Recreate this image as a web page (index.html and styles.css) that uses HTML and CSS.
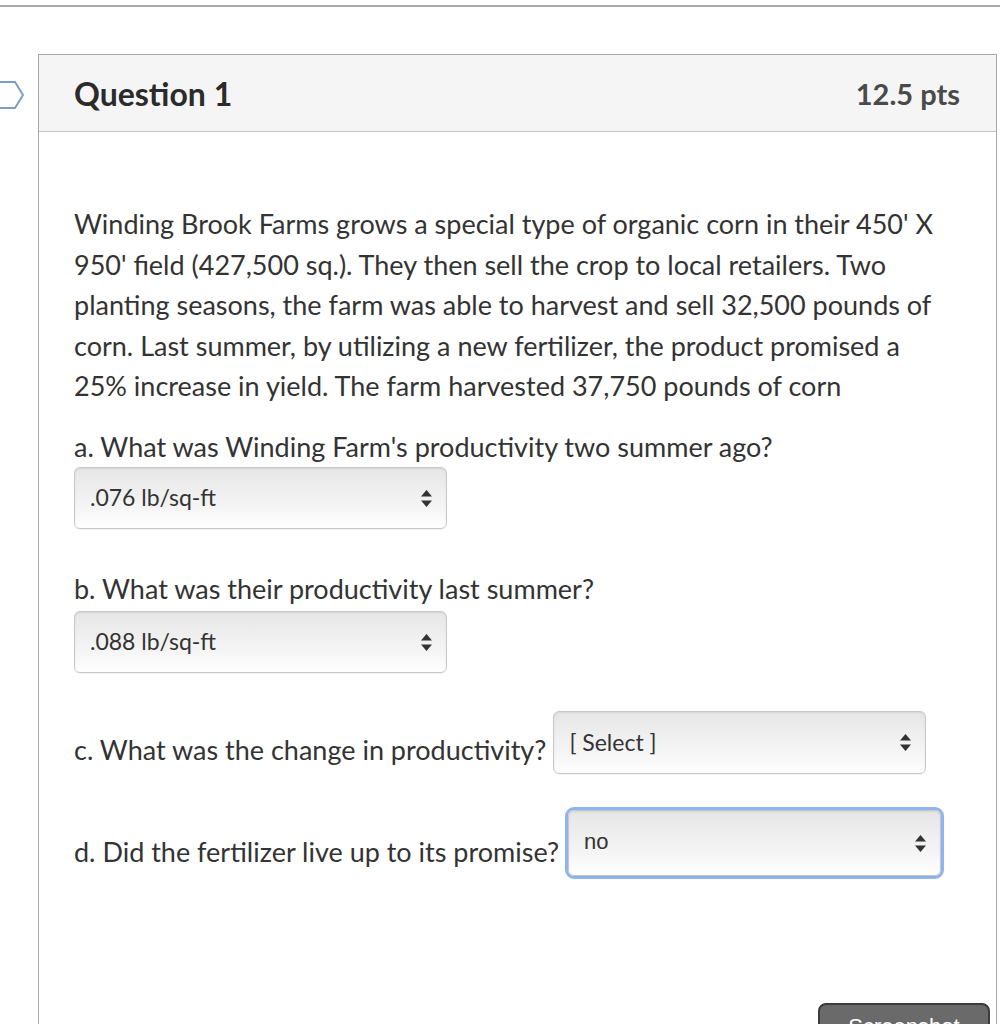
FILE: index.html
```html
<!DOCTYPE html>
<html>
<head>
<meta charset="utf-8">
<link rel="stylesheet" href="styles.css">
</head>
<body>
<div class="topbar"></div>
<div class="question">
  <svg class="pointer" width="26" height="30" viewBox="0 0 26 30"><polygon points="-4,2 15,2 23,15 15,28 -4,28" fill="#fff" stroke="#7f9dc0" stroke-width="2"/></svg>
  <div class="q-header">
    <div class="q-title">Question 1</div>
    <div class="q-pts">12.5 pts</div>
  </div>
  <div class="q-body">
    <p class="para">Winding Brook Farms grows a special type of organic corn in their 450' X 950' field (427,500 sq.). They then sell the crop to local retailers. Two planting seasons, the farm was able to harvest and sell 32,500 pounds of corn. Last summer, by utilizing a new fertilizer, the product promised a 25% increase in yield. The farm harvested 37,750 pounds of corn</p>
    <div class="ask ask-a">a. What was Winding Farm's productivity two summer ago?</div>
    <div class="sel">
      <span class="sel-text">.076 lb/sq-ft</span>
      <svg class="arr" width="11" height="17" viewBox="0 0 11 17"><polygon points="5.5,0 11,6.5 0,6.5" fill="#333"/><polygon points="0,10.5 11,10.5 5.5,17" fill="#333"/></svg>
    </div>
    <div class="ask ask-b">b. What was their productivity last summer?</div>
    <div class="sel">
      <span class="sel-text">.088 lb/sq-ft</span>
      <svg class="arr" width="11" height="17" viewBox="0 0 11 17"><polygon points="5.5,0 11,6.5 0,6.5" fill="#333"/><polygon points="0,10.5 11,10.5 5.5,17" fill="#333"/></svg>
    </div>
    <div class="inline-row row-c">
      <div class="inline-text">c. What was the change in productivity?</div>
      <div class="sel sel-c">
        <span class="sel-text">[ Select ]</span>
        <svg class="arr" width="11" height="17" viewBox="0 0 11 17"><polygon points="5.5,0 11,6.5 0,6.5" fill="#333"/><polygon points="0,10.5 11,10.5 5.5,17" fill="#333"/></svg>
      </div>
    </div>
    <div class="inline-row row-d">
      <div class="inline-text text-d">d. Did the fertilizer live up to its promise?</div>
      <div class="ring">
        <div class="sel sel-d">
          <span class="sel-text sans">no</span>
          <svg class="arr" width="11" height="17" viewBox="0 0 11 17"><polygon points="5.5,0 11,6.5 0,6.5" fill="#333"/><polygon points="0,10.5 11,10.5 5.5,17" fill="#333"/></svg>
        </div>
      </div>
    </div>
  </div>
</div>
<div class="shot-btn">Screenshot</div>
</body>
</html>
```
FILE: styles.css
```css
html, body {
  margin: 0;
  padding: 0;
  background: #fff;
}
body {
  font-family: Lato, "Open Sans", sans-serif;
  color: #333;
  overflow: hidden;
  height: 1024px;
}
.topbar {
  height: 5px;
  border-bottom: 2px solid #a9a9a9;
}
.question {
  position: relative;
  margin: 47px 3px 0 38px;
  border: 1px solid #a8a8a8;
  border-bottom: none;
  height: 1000px;
}
.pointer {
  position: absolute;
  left: -39px;
  top: 25px;
}
.q-header {
  height: 76px;
  background: #f5f5f5;
  border-bottom: 1px solid #c4c4c4;
  display: flex;
  justify-content: space-between;
  align-items: center;
  padding: 0 36px 0 35px;
}
.q-title {
  font-size: 32px;
  font-weight: 700;
  color: #2b2b2b;
}
.q-pts {
  font-size: 29px;
  font-weight: 700;
  color: #4a4a4a;
}
.q-body {
  padding: 72px 50px 0 35px;
}
.para {
  margin: 0;
  font-size: 27px;
  line-height: 40.5px;
}
.ask {
  font-size: 27px;
  line-height: 40px;
}
.ask-a {
  margin-top: 20px;
}
.ask-b {
  margin-top: 40px;
  margin-bottom: 2px;
}
.sel {
  box-sizing: border-box;
  width: 373px;
  height: 62px;
  border: 1px solid #c8c8c8;
  border-radius: 6px;
  background: linear-gradient(#e6e6e6, #f6f6f6 70%, #fff);
  box-shadow: inset 0 1px 2px rgba(0,0,0,0.08), 0 1px 1px rgba(0,0,0,0.05);
  display: flex;
  align-items: center;
  justify-content: space-between;
  padding: 0 14px 0 15px;
  flex-shrink: 0;
}
.sel-text {
  font-size: 23px;
  color: #333;
  margin-top: -1px;
}
.sans {
  font-family: "Liberation Sans", Arial, sans-serif;
  font-size: 22px;
  margin-top: -2px;
}
.arr {
  display: block;
  margin-top: 1px;
}
.inline-row {
  display: flex;
  align-items: flex-start;
}
.row-c {
  margin-top: 38px;
  gap: 7px;
}
.row-c .sel {
  height: 63px;
}
.inline-text {
  font-size: 27px;
  line-height: 40px;
  margin-top: 19px;
  white-space: nowrap;
}
.row-d {
  margin-top: 33px;
  gap: 6px;
}
.text-d {
  margin-top: 25px;
}
.ring {
  border: 3px solid #8fb4ef;
  border-radius: 9px;
  flex-shrink: 0;
}
.sel-d {
  width: 373px;
  height: 66px;
  border-radius: 6px;
}
.shot-btn {
  position: fixed;
  left: 818px;
  top: 1003px;
  width: 172px;
  height: 44px;
  box-sizing: border-box;
  background: #6a6a6a;
  border: 2px solid #3c3c3c;
  border-radius: 8px;
  color: #fff;
  font-family: "Liberation Sans", Arial, sans-serif;
  font-size: 22px;
  text-align: center;
  padding-top: 9px;
}
```
